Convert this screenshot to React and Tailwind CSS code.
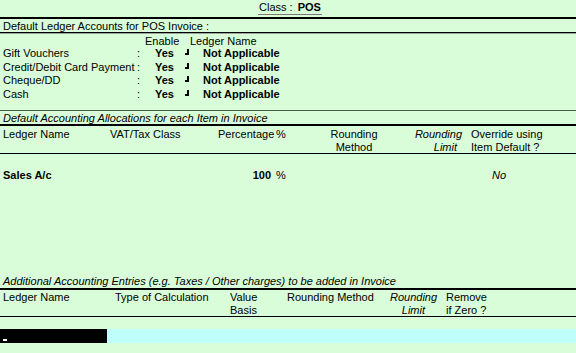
import React from 'react'

const ledgerRows = ['Gift Vouchers', 'Credit/Debit Card Payment', 'Cheque/DD', 'Cash']

const Corner = () => (
  <span className="inline-block w-[4px] h-[6px] border-r-2 border-b-2 border-black mt-[2px]"></span>
)

const App = () => {
  return (
    <div className="w-[576px] h-[353px] bg-[#d9fdd9] text-black text-[11px] leading-[13px] font-['Liberation_Sans',Arial,sans-serif] overflow-hidden flex flex-col">
      {/* title */}
      <div className="h-[17px] flex justify-center pt-[1px] pl-[4px]">
        <div className="h-[14px] border-b border-[#777] leading-[13px] px-[1px]">
          Class : <span className="font-bold ml-[2px]">POS</span>
        </div>
      </div>
      <div className="h-[2px] bg-black"></div>
      <div className="h-[13px] px-[3px] leading-[13px] pt-[1px]">Default Ledger Accounts for POS Invoice :</div>
      <div className="h-[1px] bg-black"></div>
      <div className="h-[1px] bg-[#9aa89a]"></div>

      {/* section 1 */}
      <div className="h-[13px] flex pt-[1px]">
        <div className="w-[145px]"></div>
        <div className="w-[45px]">Enable</div>
        <div>Ledger Name</div>
      </div>
      {ledgerRows.map((r) => (
        <div key={r} className="h-[13.6px] flex items-center">
          <div className="w-[137px] pl-[3px]">{r}</div>
          <div className="w-[18px]">:</div>
          <div className="w-[30px] font-bold">Yes</div>
          <div className="w-[18px] h-full flex items-start"><Corner /></div>
          <div className="font-bold">Not Applicable</div>
        </div>
      ))}
      <div className="h-[9px]"></div>
      <div className="h-[1px] bg-[#4a5a4a]"></div>
      <div className="h-[13px] px-[3px] italic pt-[1px]">Default Accounting Allocations for each Item in Invoice</div>
      <div className="h-[2px] bg-black"></div>

      {/* section 2 header */}
      <div className="h-[27px] flex pt-[2px]">
        <div className="w-[110px] pl-[3px]">Ledger Name</div>
        <div className="w-[108px]">VAT/Tax Class</div>
        <div className="w-[58px]">Percentage</div>
        <div className="w-[46px]">%</div>
        <div className="w-[64px] text-center leading-[13px]">Rounding<br />Method</div>
        <div className="w-[76px] text-right italic leading-[13px]">Rounding<br /><span className="pr-[5px]">Limit</span></div>
        <div className="pl-[9px] leading-[13px]">Override using<br />Item Default ?</div>
      </div>
      <div className="h-[1px] bg-black"></div>
      <div className="h-[15px]"></div>
      <div className="h-[13px] flex font-bold">
        <div className="w-[218px] pl-[3px]">Sales A/c</div>
        <div className="w-[53px] text-right">100</div>
        <div className="w-[221px] pl-[5px] font-normal">%</div>
        <div className="italic font-normal">No</div>
      </div>
      <div className="flex-1"></div>

      {/* section 3 */}
      <div className="h-[13px] px-[3px] italic">Additional Accounting Entries (e.g. Taxes / Other charges) to be added in Invoice</div>
      <div className="h-[2px] bg-black"></div>
      <div className="h-[26px] flex pt-[1px]">
        <div className="w-[115px] pl-[3px]">Ledger Name</div>
        <div className="w-[115px]">Type of Calculation</div>
        <div className="w-[57px] leading-[13px]">Value<br />Basis</div>
        <div className="w-[103px]">Rounding Method</div>
        <div className="w-[46px] text-right italic leading-[13px]">Rounding<br /><span className="pr-[11px]">Limit</span></div>
        <div className="pl-[10px] leading-[13px]">Remove<br />if Zero ?</div>
      </div>
      <div className="h-[1px] bg-black"></div>
      <div className="h-[12px]"></div>
      <div className="h-[14px] bg-[#bfffff] flex">
        <div className="w-[107px] h-full bg-black relative">
          <span className="absolute left-[3px] bottom-[2px] w-[4px] h-[2px] bg-white"></span>
        </div>
      </div>
      <div className="h-[10px]"></div>
    </div>
  )
}

export default App
